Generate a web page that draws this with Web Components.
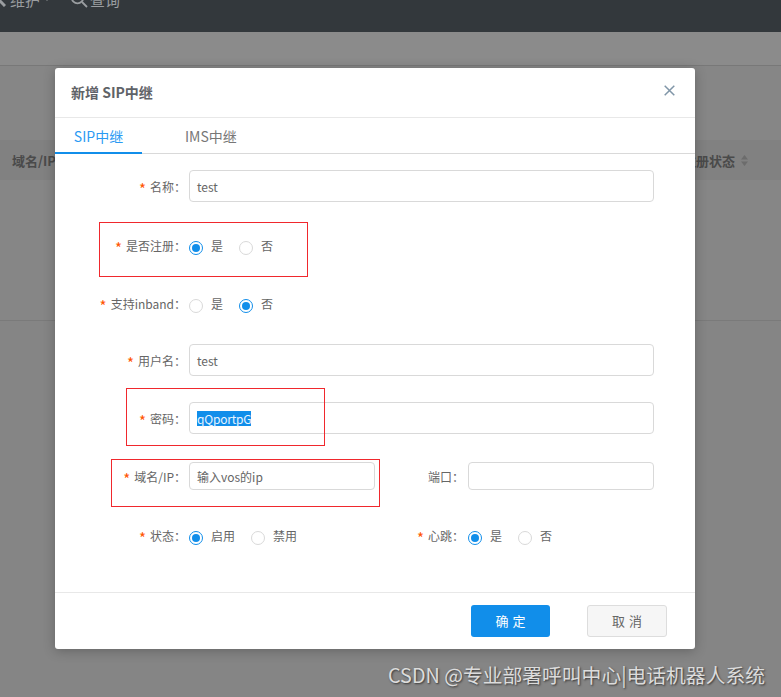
<!DOCTYPE html>
<html lang="zh">
<head>
<meta charset="utf-8">
<title>新增 SIP中继</title>
<style>
  html, body { margin: 0; height: 100%; overflow: hidden; background: #898989; }
  body { font: 12px "Noto Sans CJK SC", "Liberation Sans", sans-serif; color: #666; }
</style>
</head>
<body>
<app-page>
  <modal-dialog heading="新增 SIP中继">
    <tab-bar active="SIP中继" other="IMS中继"></tab-bar>
    <div slot="form">
      <form-row>
        <form-field label="名称" required><text-box>test</text-box></form-field>
      </form-row>
      <form-row gap="29">
        <form-field label="是否注册" required radio><radio-group first="是" second="否" checked="1"></radio-group></form-field>
      </form-row>
      <form-row gap="26">
        <form-field label="支持inband" required radio><radio-group first="是" second="否" checked="2"></radio-group></form-field>
      </form-row>
      <form-row gap="23">
        <form-field label="用户名" required><text-box>test</text-box></form-field>
      </form-row>
      <form-row gap="26">
        <form-field label="密码" required><text-box selected>qQportpG</text-box></form-field>
      </form-row>
      <form-row gap="28">
        <form-field label="域名/IP" required half><text-box short>输入vos的ip</text-box></form-field>
        <form-field label="端口" half second><text-box short></text-box></form-field>
      </form-row>
      <form-row gap="31">
        <form-field label="状态" required half radio><radio-group first="启用" second="禁用" checked="1"></radio-group></form-field>
        <form-field label="心跳" required half second radio><radio-group first="是" second="否" checked="1"></radio-group></form-field>
      </form-row>
    </div>
  </modal-dialog>
  <red-mark style="left:99px;top:222px;width:207px;height:53px"></red-mark>
  <red-mark style="left:126px;top:388px;width:197px;height:56px"></red-mark>
  <red-mark style="left:111px;top:459px;width:267px;height:46px"></red-mark>
  <water-mark>CSDN @专业部署呼叫中心|电话机器人系统</water-mark>
</app-page>

<script>
class AppPage extends HTMLElement {
  connectedCallback() {
    this.attachShadow({ mode: 'open' });
    this.shadowRoot.innerHTML = `
      <style>
        :host { display: block; position: relative; width: 781px; height: 697px; overflow: hidden; background: #898989; }
        .toolbar {
          height: 32px;
          background: #33383c;
          display: flex;
          align-items: flex-end;
          color: #9a9da0;
          font-size: 15px;
          overflow: hidden;
        }
        .tools {
          display: flex;
          align-items: center;
          height: 20px;
          margin-bottom: 23px;
          width: 100%;
        }
        .tool { display: flex; align-items: center; gap: 2px; flex: none; }
        .tool svg { display: block; }
        .maint { margin-left: -8px; width: 78px; gap: 4px; }
        .subbar { height: 34px; box-sizing: border-box; border-bottom: 1px solid #787878; background: #8b8b8b; }
        .table { height: 255px; box-sizing: border-box; border-bottom: 1px solid #7a7a7a; background: #868686; padding-top: 74px; }
        .head {
          height: 40px;
          background: #818181;
          display: flex;
          justify-content: space-between;
          align-items: center;
          padding: 0 33px 0 12px;
          font-weight: 700;
          color: #4a4a4a;
          font-size: 13px;
        }
        .sort { display: flex; align-items: center; gap: 6px; }
        .rest { height: 376px; background: #858585; }
      </style>
      <div class="toolbar">
        <div class="tools">
          <div class="tool maint">
            <svg width="14" height="16" viewBox="0 0 14 16"><path d="M4 6l9 9" stroke="#9a9da0" stroke-width="3"/></svg>
            <span>维护</span>
            <svg width="6" height="4" viewBox="0 0 6 4"><path d="M0 0h6L3 4z" fill="#9a9da0"/></svg>
          </div>
          <div class="tool">
            <svg width="18" height="18" viewBox="0 0 18 18" fill="none" stroke="#9a9da0" stroke-width="1.8"><circle cx="7.5" cy="7.5" r="5.8"/><path d="M12 12l5 5"/></svg>
            <span>查询</span>
          </div>
        </div>
      </div>
      <div class="subbar"></div>
      <div class="table">
        <div class="head">
          <span>域名/IP</span>
          <span class="sort">注册状态
            <svg width="7" height="11" viewBox="0 0 7 11"><path d="M3.5 0L7 4.5H0zM3.5 11L0 6.5h7z" fill="#6c6c6c"/></svg>
          </span>
        </div>
      </div>
      <div class="rest"></div>
      <slot></slot>
    `;
  }
}

class ModalDialog extends HTMLElement {
  connectedCallback() {
    this.attachShadow({ mode: 'open' });
    this.shadowRoot.innerHTML = `
      <style>
        :host {
          display: flex;
          flex-direction: column;
          position: absolute;
          left: 55px;
          top: 68px;
          width: 640px;
          height: 581px;
          background: #fff;
          border-radius: 3px;
          box-shadow: 0 2px 12px rgba(0, 0, 0, 0.25);
        }
        header {
          height: 50px;
          box-sizing: border-box;
          border-bottom: 1px solid #e8e8e8;
          display: flex;
          justify-content: space-between;
          padding: 0 20px 0 16px;
          align-items: center;
        }
        h2 { margin: 0 0 2px; font-size: 14px; font-weight: 700; color: #5f6368; }
        .close { display: block; margin-top: -5px; }
        .form { flex: 1; padding-top: 16px; }
        footer {
          height: 57px;
          box-sizing: border-box;
          border-top: 1px solid #e8e8e8;
          display: flex;
          justify-content: flex-end;
          align-items: center;
          padding: 0 28px 0 0;
          gap: 37px;
        }
        button {
          height: 32px;
          border-radius: 3px;
          font: inherit;
          font-size: 13px;
          letter-spacing: 4px;
          padding: 0 0 1px 4px;
          margin: 0;
        }
        .ok { width: 79px; background: #118eea; color: #fff; border: 0; }
        .cancel { width: 80px; background: #f6f6f6; color: #666; border: 1px solid #ddd; }
      </style>
      <header>
        <h2>${this.getAttribute('heading')}</h2>
        <svg class="close" width="11" height="11" viewBox="0 0 11 11"><path d="M.7.7l9.6 9.6M10.3.7L.7 10.3" stroke="#8096a8" stroke-width="1.5"/></svg>
      </header>
      <slot></slot>
      <div class="form"><slot name="form"></slot></div>
      <footer>
        <button class="ok">确定</button>
        <button class="cancel">取消</button>
      </footer>
    `;
  }
}

class TabBar extends HTMLElement {
  connectedCallback() {
    this.attachShadow({ mode: 'open' });
    this.shadowRoot.innerHTML = `
      <style>
        :host {
          display: flex;
          height: 36px;
          box-sizing: border-box;
          border-bottom: 1px solid #d9d9d9;
          font-size: 14px;
          color: #777;
        }
        div { height: 36px; box-sizing: border-box; line-height: 36px; }
        .on { width: 87px; text-align: center; color: #2b9af3; border-bottom: 2px solid #118eea; }
        .off { margin-left: 43px; }
      </style>
      <div class="on">${this.getAttribute('active')}</div>
      <div class="off">${this.getAttribute('other')}</div>
    `;
  }
}

class FormRow extends HTMLElement {
  connectedCallback() {
    this.attachShadow({ mode: 'open' });
    this.shadowRoot.innerHTML = `
      <style>
        :host { display: flex; margin-top: ${this.getAttribute('gap') || 0}px; padding-right: 41px; }
      </style>
      <slot></slot>
    `;
  }
}

class FormField extends HTMLElement {
  connectedCallback() {
    const half = this.hasAttribute('half');
    const second = this.hasAttribute('second');
    this.attachShadow({ mode: 'open' });
    this.shadowRoot.innerHTML = `
      <style>
        :host {
          display: flex;
          align-items: center;
          flex: ${half ? 'none' : '1'};
          ${half ? `width: ${second ? 279 : 320}px;` : ''}
          min-height: 28px;
        }
        label {
          flex: none;
          width: ${second ? 93 : 134}px;
          box-sizing: border-box;
          padding-right: ${second ? 4 : 3}px;
          text-align: right;
          white-space: nowrap;
          color: #666;
          position: relative;
          top: ${this.hasAttribute('radio') ? -2 : 0}px;
        }
        .star { color: #f50; font-size: 15px; line-height: 12px; margin-right: 4px; position: relative; top: 3px; }
        .control { flex: 1; min-width: 0; }
      </style>
      <label>${this.hasAttribute('required') ? '<span class="star">*</span>' : ''}${this.getAttribute('label')}：</label>
      <div class="control"><slot></slot></div>
    `;
  }
}

class TextBox extends HTMLElement {
  connectedCallback() {
    const short = this.hasAttribute('short');
    const selected = this.hasAttribute('selected');
    this.attachShadow({ mode: 'open' });
    this.shadowRoot.innerHTML = `
      <style>
        :host {
          display: flex;
          align-items: center;
          box-sizing: border-box;
          height: ${short ? 28 : 32}px;
          border: 1px solid #d9d9d9;
          border-radius: 4px;
          padding: 0 7px;
          color: #666;
          background: #fff;
          ${short ? 'width: 186px;' : ''}
        }
        .sel { background: #118eea; color: #e8f4ff; line-height: 15px; letter-spacing: -0.2px; }
      </style>
      ${selected ? '<span class="sel"><slot></slot></span>' : '<slot></slot>'}
    `;
  }
}

class RadioGroup extends HTMLElement {
  connectedCallback() {
    const checked = this.getAttribute('checked');
    const option = (text, n) => `
      <span class="opt">
        <span class="dot ${checked === n ? 'on' : ''}"></span>
        <span class="txt">${text}</span>
      </span>`;
    this.attachShadow({ mode: 'open' });
    this.shadowRoot.innerHTML = `
      <style>
        :host { display: flex; height: 32px; align-items: center; gap: 16px; }
        .opt { display: flex; align-items: center; gap: 8px; }
        .txt { color: #666; position: relative; top: -2px; }
        .dot {
          width: 14px;
          height: 14px;
          box-sizing: border-box;
          border-radius: 50%;
          border: 1px solid #d9d9d9;
          position: relative;
          top: 1px;
        }
        .dot.on { border-color: #118eea; }
        .dot.on::after {
          content: '';
          position: absolute;
          left: 2px;
          top: 2px;
          width: 8px;
          height: 8px;
          border-radius: 50%;
          background: #118eea;
        }
      </style>
      ${option(this.getAttribute('first'), '1')}
      ${option(this.getAttribute('second'), '2')}
    `;
  }
}

class RedMark extends HTMLElement {
  connectedCallback() {
    this.attachShadow({ mode: 'open' });
    this.shadowRoot.innerHTML = `
      <style>
        :host { display: block; position: absolute; border: 1px solid #f0282d; }
      </style>
    `;
  }
}

class WaterMark extends HTMLElement {
  connectedCallback() {
    this.attachShadow({ mode: 'open' });
    this.shadowRoot.innerHTML = `
      <style>
        :host {
          display: block;
          position: absolute;
          left: 388px;
          top: 661px;
          white-space: nowrap;
          font-size: 19.8px;
          line-height: 28px;
          color: #dcdcdc;
          text-shadow: 1px 1px 2px rgba(0, 0, 0, 0.6);
        }
      </style>
      <slot></slot>
    `;
  }
}

customElements.define('app-page', AppPage);
customElements.define('modal-dialog', ModalDialog);
customElements.define('tab-bar', TabBar);
customElements.define('form-row', FormRow);
customElements.define('form-field', FormField);
customElements.define('text-box', TextBox);
customElements.define('radio-group', RadioGroup);
customElements.define('red-mark', RedMark);
customElements.define('water-mark', WaterMark);
</script>
</body>
</html>
